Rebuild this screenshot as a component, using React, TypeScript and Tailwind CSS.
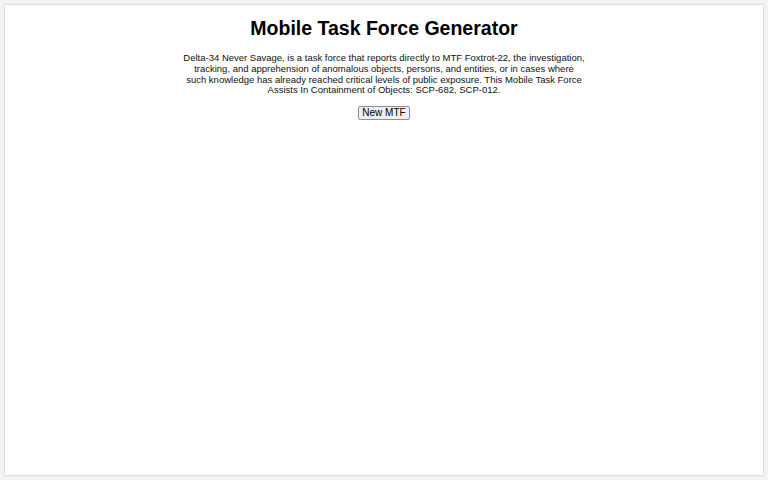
export default function App() {
  return (
    <div className="h-[480px] w-[768px] bg-[#f3f3f3] p-[4px] font-['Liberation_Sans',Arial,sans-serif] text-black">
      <div className="flex h-full flex-col items-center border border-[#dcdcdc] bg-white">
        <h1 className="mt-[11px] text-[19.5px] font-bold leading-[24px]">Mobile Task Force Generator</h1>
        <p className="mt-[13px] w-[420px] text-center text-[9.5px] leading-[10.8px] text-[#111]">
          Delta-34 Never Savage, is a task force that reports directly to MTF Foxtrot-22, the investigation,
          <br />
          tracking, and apprehension of anomalous objects, persons, and entities, or in cases where
          <br />
          such knowledge has already reached critical levels of public exposure. This Mobile Task Force
          <br />
          Assists In Containment of Objects: SCP-682, SCP-012.
        </p>
        <button className="mt-[10px] h-[14px] w-[52px] rounded-[2px] border border-[#8f8f8f] bg-[#efefef] text-[10px] leading-[12px]">
          New MTF
        </button>
      </div>
    </div>
  );
}
